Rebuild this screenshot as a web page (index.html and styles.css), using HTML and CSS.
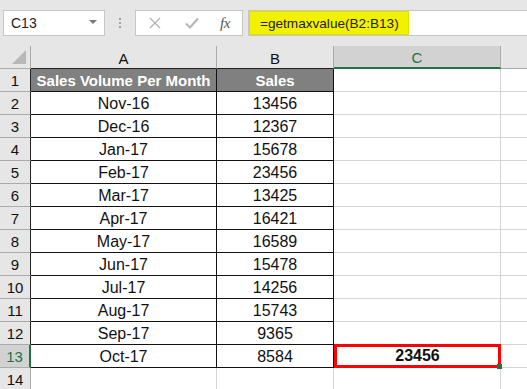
FILE: index.html
```html
<!DOCTYPE html>
<html>
<head>
<meta charset="utf-8">
<link rel="stylesheet" href="styles.css">
</head>
<body>
<div class="toolbar">
  <div class="namebox"><span>C13</span><span class="caret"></span></div>
  <div class="grip"><i></i><i></i><i></i></div>
  <div class="buttons">
    <svg class="ico" width="12" height="12" viewBox="0 0 12 12"><path d="M1 1L11 11M11 1L1 11" stroke="#b4b4b4" stroke-width="1.4" fill="none"/></svg>
    <svg class="ico" width="14" height="12" viewBox="0 0 14 12"><path d="M1 6.5L5 10.5L13 1.5" stroke="#b4b4b4" stroke-width="2" fill="none"/></svg>
    <span class="fx">fx</span>
  </div>
  <div class="formula"><span class="hl">=getmaxvalue(B2:B13)</span></div>
</div>
<div class="sheet">
  <div class="corner"><span class="tri"></span></div>
  <div class="ch dark">A</div>
  <div class="ch dark">B</div>
  <div class="ch sel">C</div>
  <div class="ch"></div>

  <div class="rh tb">1</div><div class="c t hd">Sales Volume Per Month</div><div class="c t hd">Sales</div><div class="c"></div><div class="c"></div>
  <div class="rh tb">2</div><div class="c t">Nov-16</div><div class="c t">13456</div><div class="c"></div><div class="c"></div>
  <div class="rh tb">3</div><div class="c t">Dec-16</div><div class="c t">12367</div><div class="c"></div><div class="c"></div>
  <div class="rh tb">4</div><div class="c t">Jan-17</div><div class="c t">15678</div><div class="c"></div><div class="c"></div>
  <div class="rh tb">5</div><div class="c t">Feb-17</div><div class="c t">23456</div><div class="c"></div><div class="c"></div>
  <div class="rh tb">6</div><div class="c t">Mar-17</div><div class="c t">13425</div><div class="c"></div><div class="c"></div>
  <div class="rh tb">7</div><div class="c t">Apr-17</div><div class="c t">16421</div><div class="c"></div><div class="c"></div>
  <div class="rh tb">8</div><div class="c t">May-17</div><div class="c t">16589</div><div class="c"></div><div class="c"></div>
  <div class="rh tb">9</div><div class="c t">Jun-17</div><div class="c t">15478</div><div class="c"></div><div class="c"></div>
  <div class="rh tb">10</div><div class="c t">Jul-17</div><div class="c t">14256</div><div class="c"></div><div class="c"></div>
  <div class="rh tb">11</div><div class="c t">Aug-17</div><div class="c t">15743</div><div class="c"></div><div class="c"></div>
  <div class="rh tb">12</div><div class="c t">Sep-17</div><div class="c t">9365</div><div class="c"></div><div class="c"></div>
  <div class="rh selr">13</div><div class="c t">Oct-17</div><div class="c t">8584</div><div class="c active">23456<span class="handle"></span></div><div class="c"></div>
  <div class="rh">14</div><div class="c"></div><div class="c"></div><div class="c"></div><div class="c"></div>
</div>
</body>
</html>
```
FILE: styles.css
```css
* { box-sizing: border-box; }
body {
  margin: 0;
  background: #ffffff;
  font-family: "Liberation Sans", Arial, sans-serif;
  overflow: hidden;
}
.toolbar {
  height: 46px;
  background: #e6e6e6;
  display: flex;
  align-items: flex-start;
  padding-top: 10px;
}
.namebox {
  margin-left: 3px;
  width: 102px;
  height: 26px;
  background: #fff;
  border: 1px solid #c6c6c6;
  display: flex;
  align-items: center;
  justify-content: space-between;
  padding: 0 7px 0 7px;
  font-size: 14px;
  color: #222;
}
.caret {
  width: 0; height: 0;
  border-left: 4px solid transparent;
  border-right: 4px solid transparent;
  border-top: 4px solid #777;
  margin-top: -2px;
}
.grip {
  width: 30px;
  height: 26px;
  display: flex;
  flex-direction: column;
  align-items: center;
  justify-content: center;
  gap: 2px;
}
.grip i {
  width: 2px; height: 2px; background: #a0a0a0; display: block;
}
.buttons {
  width: 108px;
  height: 26px;
  background: #fff;
  border: 1px solid #c6c6c6;
  display: flex;
  align-items: center;
  padding-left: 13px;
}
.buttons svg:nth-child(1) { margin-right: 24px; }
.buttons svg:nth-child(2) { margin-right: 21px; }
.fx {
  font-family: "Liberation Serif", "Times New Roman", serif;
  font-style: italic;
  font-size: 15px;
  color: #555;
  letter-spacing: -0.5px;
}
.formula {
  margin-left: 5px;
  flex: 1;
  height: 26px;
  background: #fff;
  border: 1px solid #c6c6c6;
  border-right: none;
  display: flex;
}
.hl {
  background: #f2f200;
  width: 160px;
  height: 24px;
  padding-left: 10px;
  font-size: 13.6px;
  line-height: 24px;
  color: #222;
  border: 1px solid #e0e000;
}
.sheet {
  display: grid;
  grid-template-columns: 31px 186px 117px 167px 40px;
  grid-auto-rows: 23px;
  font-size: 16px;
  color: #111;
}
.corner {
  background: #e6e6e6;
  border-right: 1px solid #ababab;
  border-bottom: 1px solid #ababab;
  position: relative;
}
.tri {
  position: absolute;
  right: 4px;
  bottom: 4px;
  width: 0; height: 0;
  border-left: 14px solid transparent;
  border-bottom: 14px solid #b8b8b8;
}
.ch {
  background: #e6e6e6;
  border-right: 1px solid #ababab;
  border-bottom: 1px solid #ababab;
  display: flex;
  align-items: center;
  justify-content: center;
  padding-top: 2px;
  font-size: 15px;
}
.ch.dark { border-bottom-color: #222; }
.ch.sel {
  background: #d2d2d2;
  color: #217346;
  border-bottom: 2px solid #217346;
}
.rh {
  background: #e6e6e6;
  border-right: 1px solid #ababab;
  border-bottom: 1px solid #ababab;
  display: flex;
  align-items: center;
  justify-content: center;
  padding-top: 1px;
  font-size: 15px;
}
.rh.tb { border-right-color: #222; }
.rh.selr {
  background: #d2d2d2;
  color: #217346;
  border-right: 2px solid #217346;
}
.c {
  border-right: 1px solid #d4d4d4;
  border-bottom: 1px solid #d4d4d4;
  display: flex;
  align-items: center;
  justify-content: center;
  padding-top: 1px;
  white-space: nowrap;
}
.c.t {
  border-right-color: #111;
  border-bottom-color: #111;
}
.c.hd {
  background: #808080;
  color: #fff;
  font-weight: bold;
  font-size: 15px;
}
.c.active {
  position: relative;
  border: 3px solid #ff0000;
  margin-top: -1px;
  font-weight: bold;
  padding-top: 0;
}
.handle {
  position: absolute;
  right: -4px;
  bottom: -4px;
  width: 5px;
  height: 5px;
  background: #217346;
}
```
